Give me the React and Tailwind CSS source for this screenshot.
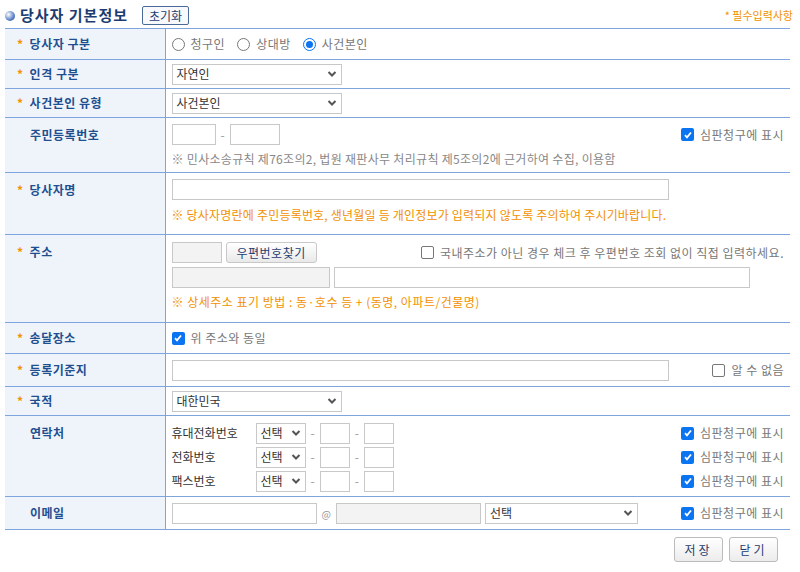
import React from "react";

const Star = () => <span className="text-[#f29100] mr-[6px]">*</span>;

const Label = ({ req, children, top }) => (
  <td className={`w-[160px] bg-[#eff4fb] border-r border-[#7fa5dd] pl-[12px] font-bold text-[#1f4f8f] tracking-[0.5px] ${top ? "align-top pt-[8px]" : "align-middle"}`}>
    {req ? <Star /> : <span className="inline-block w-[13px]" />}
    {children}
  </td>
);

const Row = ({ h, children }) => (
  <tr className="border-b border-[#7fa5dd]" style={{ height: h }}>{children}</tr>
);

const Box = ({ w, gray }) => (
  <input className={`h-[21px] border border-[#c8c8c8] ${gray ? "bg-[#f3f3f3]" : "bg-white"} outline-none`} style={{ width: w }} />
);

const Select = ({ w, value }) => (
  <div className="h-[21px] border border-[#c8c8c8] bg-white flex items-center justify-between px-[4px] text-[#333]" style={{ width: w }}>
    <span>{value}</span>
    <svg width="10" height="8" viewBox="0 0 10 8"><path d="M1.5 2l3.5 3.5L8.5 2" stroke="#555" strokeWidth="2" fill="none" /></svg>
  </div>
);

const Check = ({ checked = true, label }) => (
  <label className="flex items-center gap-[6px] text-[#777] tracking-[0.5px]">
    {checked ? (
      <span className="w-[13px] h-[13px] rounded-[2px] bg-[#0b74f0] flex items-center justify-center">
        <svg width="10" height="10" viewBox="0 0 10 10"><path d="M2 5.2l2 2.2L8 2.5" stroke="white" strokeWidth="1.8" fill="none" /></svg>
      </span>
    ) : (
      <span className="w-[13px] h-[13px] rounded-[2px] border border-[#777] bg-white" />
    )}
    {label}
  </label>
);

const Radio = ({ on, label }) => (
  <label className="flex items-center gap-[6px] text-[#777] tracking-[0.5px]">
    <span className={`w-[13px] h-[13px] rounded-full border ${on ? "border-[#0b74f0]" : "border-[#777]"} flex items-center justify-center`}>
      {on && <span className="w-[7px] h-[7px] rounded-full bg-[#0b74f0]" />}
    </span>
    {label}
  </label>
);

const Dash = () => <span className="text-[#999] mx-[5px]">-</span>;

const Phone = ({ label }) => (
  <div className="flex items-center h-[24px]">
    <span className="w-[84px] text-[#333]">{label}</span>
    <Select w={50} value="선택" />
    <Dash />
    <Box w={30} />
    <Dash />
    <Box w={30} />
    <div className="ml-auto"><Check label="심판청구에 표시" /></div>
  </div>
);

export default function App() {
  return (
    <div className="w-[800px] h-[572px] bg-white text-[12px] px-[5px] pt-[3px]" style={{ fontFamily: '"Noto Sans CJK KR", "Noto Sans", sans-serif' }}>
      <div className="flex items-center h-[25px] pr-[2px]">
        <span className="w-[10px] h-[10px] rounded-full bg-[radial-gradient(circle_at_35%_35%,#fff,#5b82c9_60%,#1f4f8f)] mr-[5px]" />
        <span className="font-bold text-[15px] text-[#1d3c70] tracking-[1px]">당사자 기본정보</span>
        <button className="ml-[14px] h-[19px] px-[6px] border border-[#4a6a9a] rounded-[2px] text-[12px] text-[#1d3c70] bg-[#f7f9fc]">초기화</button>
        <span className="ml-auto text-[#f29100] text-[11px]">* 필수입력사항</span>
      </div>
      <table className="w-[785px] border-collapse border-t border-[#7fa5dd]">
        <tbody>
          <Row h={31}>
            <Label req>당사자 구분</Label>
            <td className="pl-[6px]"><div className="flex gap-[12px]"><Radio label="청구인" /><Radio label="상대방" /><Radio on label="사건본인" /></div></td>
          </Row>
          <Row h={29}><Label req>인격 구분</Label><td className="pl-[6px]"><Select w={170} value="자연인" /></td></Row>
          <Row h={29}><Label req>사건본인 유형</Label><td className="pl-[6px]"><Select w={170} value="사건본인" /></td></Row>
          <Row h={55}>
            <Label top>주민등록번호</Label>
            <td className="pl-[6px] pr-[6px] align-top pt-[6px]">
              <div className="flex items-center"><Box w={44} /><Dash /><Box w={50} /><div className="ml-auto"><Check label="심판청구에 표시" /></div></div>
              <div className="text-[#888] mt-[5px] tracking-[0.3px]">※ 민사소송규칙 제76조의2, 법원 재판사무 처리규칙 제5조의2에 근거하여 수집, 이용함</div>
            </td>
          </Row>
          <Row h={62}>
            <Label req top>당사자명</Label>
            <td className="pl-[6px] align-top pt-[6px]">
              <Box w={497} />
              <div className="text-[#f29100] mt-[6px] tracking-[0.2px]">※ 당사자명란에 주민등록번호, 생년월일 등 개인정보가 입력되지 않도록 주의하여 주시기바랍니다.</div>
            </td>
          </Row>
          <Row h={88}>
            <Label req top>주소</Label>
            <td className="pl-[6px] pr-[6px] align-top pt-[7px]">
              <div className="flex items-center gap-[4px]">
                <Box w={50} gray />
                <button className="h-[21px] px-[10px] border border-[#c8c8c8] rounded-[3px] bg-gradient-to-b from-white to-[#e9e9e9] text-[#1d3c70] tracking-[0.5px]">우편번호찾기</button>
                <div className="ml-auto"><Check checked={false} label="국내주소가 아닌 경우 체크 후 우편번호 조회 없이 직접 입력하세요." /></div>
              </div>
              <div className="flex gap-[4px] mt-[4px]"><Box w={158} gray /><Box w={416} /></div>
              <div className="text-[#f29100] mt-[5px] tracking-[0.5px]">※ 상세주소 표기 방법 : 동·호수 등 + (동명, 아파트/건물명)</div>
            </td>
          </Row>
          <Row h={31}><Label req>송달장소</Label><td className="pl-[6px]"><Check label="위 주소와 동일" /></td></Row>
          <Row h={33}>
            <Label req>등록기준지</Label>
            <td className="pl-[6px] pr-[6px]"><div className="flex items-center"><Box w={497} /><div className="ml-auto"><Check checked={false} label="알 수 없음" /></div></div></td>
          </Row>
          <Row h={29}><Label req>국적</Label><td className="pl-[6px]"><Select w={170} value="대한민국" /></td></Row>
          <Row h={81}>
            <Label top>연락처</Label>
            <td className="pl-[6px] pr-[6px] align-top pt-[5px]">
              <Phone label="휴대전화번호" /><Phone label="전화번호" /><Phone label="팩스번호" />
            </td>
          </Row>
          <Row h={33}>
            <Label>이메일</Label>
            <td className="pl-[6px] pr-[6px]">
              <div className="flex items-center">
                <Box w={145} /><span className="text-[#999] mx-[5px] text-[10px]">@</span><Box w={145} gray />
                <div className="ml-[4px]"><Select w={153} value="선택" /></div>
                <div className="ml-auto"><Check label="심판청구에 표시" /></div>
              </div>
            </td>
          </Row>
        </tbody>
      </table>
      <div className="flex justify-end gap-[6px] mt-[7px] pr-[17px]">
        <button className="h-[25px] w-[49px] border border-[#bbb] rounded-[3px] bg-gradient-to-b from-white to-[#ececec] text-[#1d3c70] tracking-[3px]">저장</button>
        <button className="h-[25px] w-[49px] border border-[#bbb] rounded-[3px] bg-gradient-to-b from-white to-[#ececec] text-[#1d3c70] tracking-[3px]">닫기</button>
      </div>
    </div>
  );
}
